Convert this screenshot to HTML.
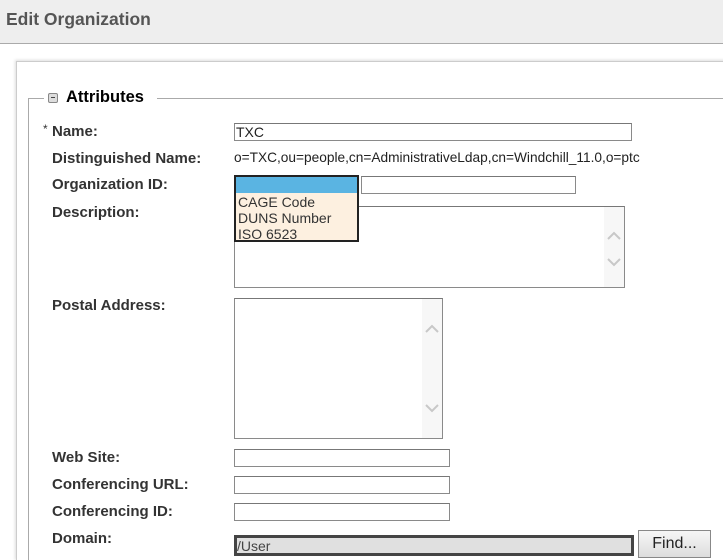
<!DOCTYPE html><html style="overflow:hidden"><head><style>
html,body{overflow:hidden}
body{margin:0;width:723px;height:560px;background:#fff;font-family:"Liberation Sans",Arial,sans-serif;position:relative}
div,span{position:absolute;box-sizing:border-box}
.hdr{left:0;top:0;width:723px;height:44px;background:#eee;border-bottom:1px solid #aaa}
.ttl{left:6px;top:9px;font-size:17.5px;font-weight:bold;color:#555}
.lbl{left:52px;font-size:15px;font-weight:bold;color:#333}
.in{border:1px solid #8a8a8a;background:#fff;border-top-color:#777}
.sb{right:0;top:0;bottom:0;width:20px;background:#f7f7f7}
.t{font-size:14px;color:#222}
</style></head><body>
<div class="hdr"></div><div class="ttl">Edit Organization</div>
<div style="left:16px;top:61px;width:720px;height:500px;border-left:1px solid #ccc;border-top:1px solid #ccc;box-shadow:-1px -1px 3px #ddd"></div>
<div style="left:28px;top:98px;width:16px;border-top:1px solid #aaa"></div>
<div style="left:157px;top:98px;width:570px;border-top:1px solid #aaa"></div>
<div style="left:28px;top:98px;height:462px;border-left:1px solid #aaa"></div>
<div style="left:48px;top:93px;width:10px;height:10px;border:1px solid #888;background:#ddd;border-radius:2px"><span style="left:2px;top:3px;width:4px;border-top:1px solid #444"></span></div>
<div style="left:66px;top:88px;font-size:16.5px;font-weight:bold;color:#000">Attributes</div>
<div style="left:43px;top:122px;font-size:12px;color:#333">*</div>
<div class="lbl" style="top:123px">Name:</div>
<div class="lbl" style="top:150px">Distinguished Name:</div>
<div class="lbl" style="top:176px">Organization ID:</div>
<div class="lbl" style="top:204px">Description:</div>
<div class="lbl" style="top:297px">Postal Address:</div>
<div class="lbl" style="top:449px">Web Site:</div>
<div class="lbl" style="top:476px">Conferencing URL:</div>
<div class="lbl" style="top:503px">Conferencing ID:</div>
<div class="lbl" style="top:530px">Domain:</div>
<div class="in" style="left:234px;top:123px;width:398px;height:18px"><span class="t" style="left:1px;top:0">TXC</span></div>
<div style="left:234px;top:150px;font-size:13.7px;color:#222">o=TXC,ou=people,cn=AdministrativeLdap,cn=Windchill_11.0,o=ptc</div>
<div class="in" style="left:361px;top:176px;width:215px;height:18px"></div>
<div class="in" style="left:234px;top:206px;width:391px;height:82px"><span class="sb"><svg width="20" height="80"><path d="M4 32l6-6 6 6M4 52l6 6 6-6" stroke="#c8c8c8" stroke-width="2" fill="none"/></svg></span></div>
<div class="in" style="left:234px;top:298px;width:209px;height:141px"><span class="sb"><svg width="20" height="140"><path d="M4 33l6-6 6 6M4 106l6 6 6-6" stroke="#c8c8c8" stroke-width="2" fill="none"/></svg></span></div>
<div style="left:234px;top:175px;width:125px;height:67px;border:2px solid #222;background:#fdf0e0">
<span style="left:0;top:0;width:121px;height:16px;background:#5ab4e2"></span>
<span class="t" style="left:2px;top:17px;line-height:16px;color:#333">CAGE Code<br>DUNS Number<br>ISO 6523</span></div>
<div class="in" style="left:234px;top:449px;width:216px;height:18px"></div>
<div class="in" style="left:234px;top:476px;width:216px;height:18px"></div>
<div class="in" style="left:234px;top:503px;width:216px;height:18px"></div>
<div style="left:234px;top:535px;width:400px;height:21px;border:3px solid #444;background:#e0e0e0"><span class="t" style="left:0;top:0;color:#444">/User</span></div>
<div style="left:638px;top:530px;width:73px;height:28px;border:1px solid #888;background:linear-gradient(#f6f6f6,#ddd);font-size:16px;color:#222;text-align:center;line-height:26px">Find...</div>
</body></html>
